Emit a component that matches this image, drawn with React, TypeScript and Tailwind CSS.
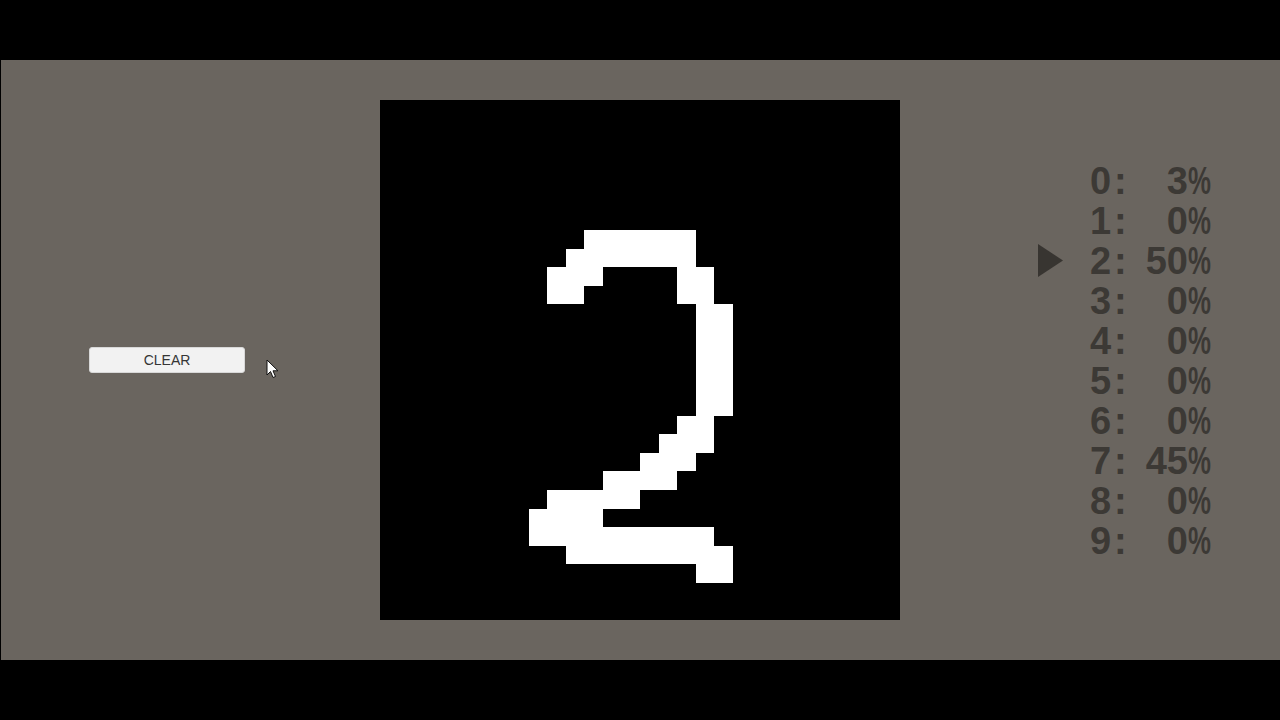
import React from 'react';

// white pixel runs on the 28x28 drawing grid: [row, fromCol, toCol]
const runs: [number, number, number][] = [
  [7, 11, 16],
  [8, 10, 16],
  [9, 9, 11],
  [9, 16, 17],
  [10, 9, 10],
  [10, 16, 17],
  [11, 17, 18],
  [12, 17, 18],
  [13, 17, 18],
  [14, 17, 18],
  [15, 17, 18],
  [16, 17, 18],
  [17, 16, 17],
  [18, 15, 17],
  [19, 14, 16],
  [20, 12, 15],
  [21, 9, 13],
  [22, 8, 11],
  [23, 8, 17],
  [24, 10, 18],
  [25, 17, 18],
];

const scores = [3, 0, 50, 0, 0, 0, 0, 45, 0, 0];
const best = 2;

function Cursor() {
  return (
    <svg width="14" height="21" viewBox="0 0 14 21" className="absolute left-[265px] top-[299px]">
      <path d="M1 1 L1 16 L4.5 12.5 L7 18.5 L9.5 17.5 L7 11.8 L12 11.8 Z" fill="#fff" stroke="#111" strokeWidth="1" strokeLinejoin="round" />
    </svg>
  );
}

export default function App() {
  return (
    <div className="w-[1280px] h-[720px] bg-black flex flex-col overflow-hidden">
      <div className="h-[60px]" />

      {/* Main panel */}
      <div className="relative h-[600px] ml-px bg-[#6a655f] flex">
        <div className="w-[379px] flex items-center pl-[88px]">
          <button className="w-[156px] h-[26px] bg-[#f2f2f2] rounded-[3px] border border-[#d8d8d8] text-[14px] text-[#353535] font-['Liberation_Sans',Arial,sans-serif] leading-none">
            CLEAR
          </button>
        </div>

        <div className="pt-[40px]">
          <svg width="520" height="520" viewBox="0 0 28 28" shapeRendering="crispEdges" className="block bg-black">
            {runs.map(([r, a, b], i) => (
              <rect key={i} x={a} y={r} width={b - a + 1} height={1} fill="#fff" />
            ))}
          </svg>
        </div>

        <div className="flex-1 flex items-center pl-[138px] pt-[1px]">
          <div className="flex flex-col font-['Liberation_Sans',Arial,sans-serif] font-bold text-[38px] leading-[40px] text-[#3c3935]">
            {scores.map((s, d) => (
              <div key={d} className="h-[40px] flex items-center">
                <div className="w-[52px] flex items-center">
                  {d === best && (
                    <svg width="25" height="33" viewBox="0 0 25 33" className="block">
                      <path d="M0 0 L25 16.5 L0 33 Z" fill="#383531" />
                    </svg>
                  )}
                </div>
                <span className="w-[24px]">{d}</span>
                <span className="w-[14px]">:</span>
                <span className="w-[82px] text-right whitespace-nowrap">
                  {s}
                  <span className="inline-block w-[22px] text-left scale-x-[0.68] origin-left">%</span>
                </span>
              </div>
            ))}
          </div>
        </div>

        <Cursor />
      </div>

      <div className="h-[60px]" />
    </div>
  );
}
